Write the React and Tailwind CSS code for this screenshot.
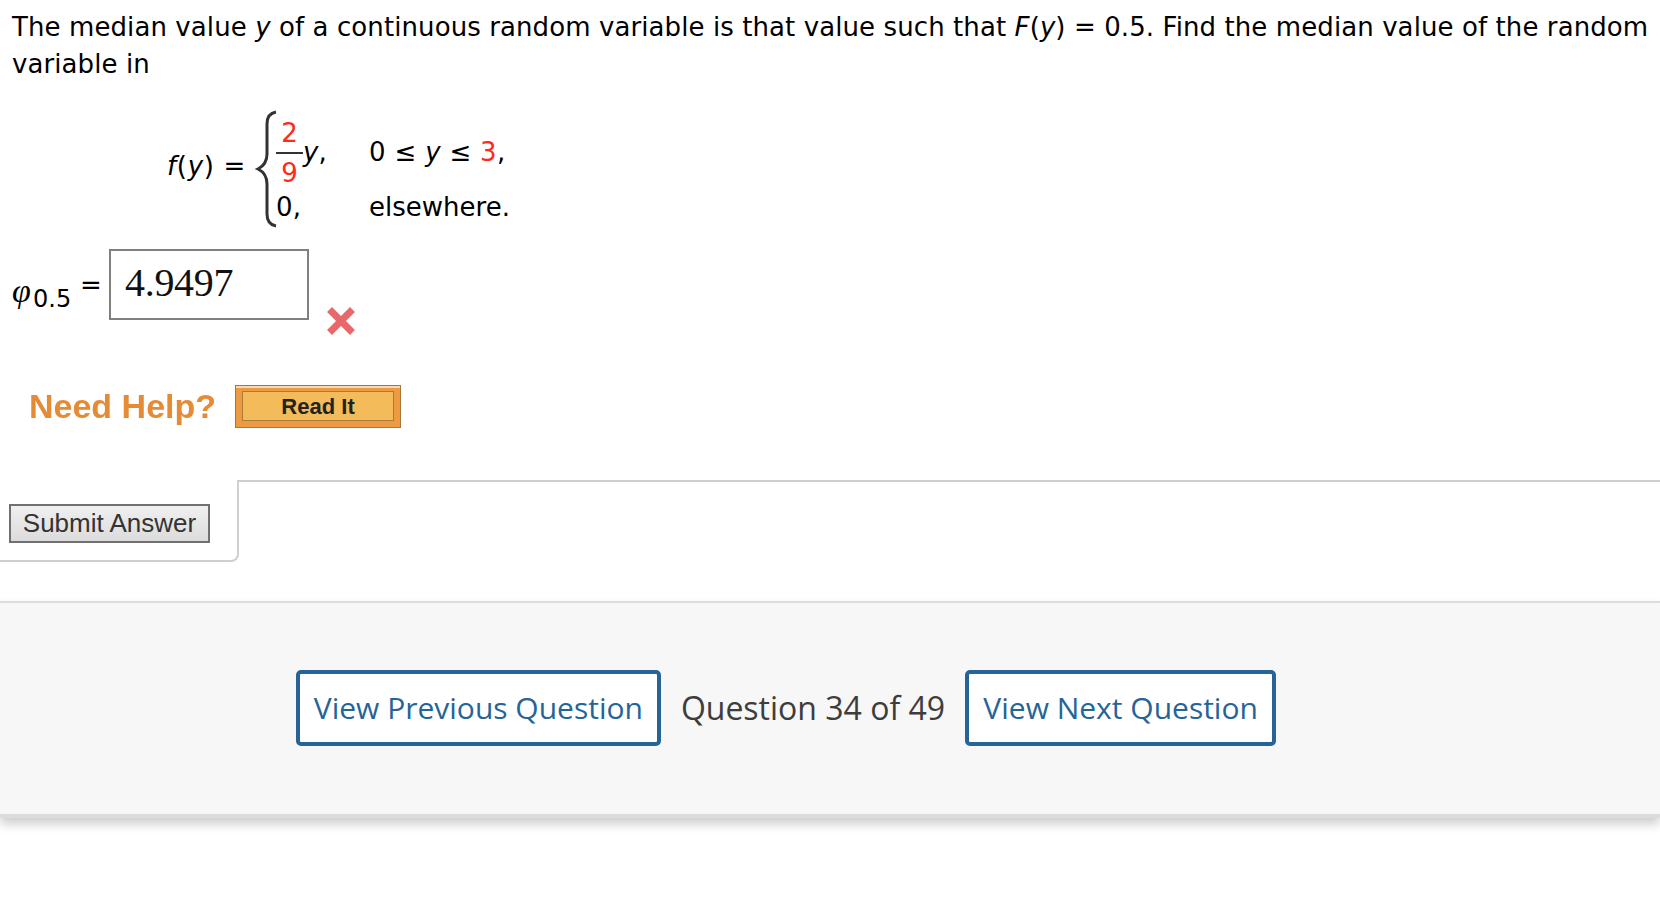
import React from 'react';

function Brace() {
  return (
    <svg width="26" height="118" viewBox="0 0 26 118" className="shrink-0" fill="none">
      <path d="M23 2C17 3 14 7 14 14V44C14 52 11 56 5 59C11 62 14 66 14 74V104C14 111 17 115 23 116" stroke="#333" strokeWidth="3" />
    </svg>
  );
}

function WrongMark() {
  return (
    <svg width="30" height="30" viewBox="0 0 30 30" className="ml-[17px] mt-[57px] shrink-0 blur-[0.4px]">
      <path d="M6 6L24 24M24 6L6 24" stroke="#e8696a" strokeWidth="7" strokeLinecap="square" />
    </svg>
  );
}

export default function App() {
  return (
    <div className="min-h-screen bg-white font-['DejaVu_Sans','Liberation_Sans',sans-serif] text-[26px] leading-[37px] text-black">
      <p className="pl-3 pt-[9px] tracking-[0.09px]">
        The median value <i>y</i> of a continuous random variable is that value such that <i>F</i>(<i>y</i>) = 0.5. Find the median value of the random variable in
      </p>

      {/* piecewise function */}
      <div className="mt-[27px] ml-[167px] flex items-center h-[118px]">
        <span className="mr-[7px] mb-[6px] tracking-[0.7px]"><i>f</i>(<i>y</i>) =</span>
        <Brace />
        <div className="-ml-[3px] mt-[4px] grid grid-cols-[93px_auto] items-center">
          <div className="flex items-center h-[73px]">
            <span className="flex flex-col items-center text-[#ff2a1a] leading-[38px]">
              <span className="w-[27px] text-center border-b-2 border-[#333]">2</span>
              <span>9</span>
            </span>
            <span><i>y</i>,</span>
          </div>
          <div className="tracking-[0.3px]">0 ≤ <i>y</i> ≤ <span className="text-[#ff2a1a]">3</span>,</div>
          <div>0,</div>
          <div>elsewhere.</div>
        </div>
      </div>

      {/* answer */}
      <div className="mt-[21px] ml-3 flex items-start">
        <i className="w-[21px] mt-[23px] font-['Liberation_Serif',serif] text-[34px]">φ</i>
        <span className="w-[47px] mt-[32px] text-[24px]">0.5</span>
        <span className="w-[29px] mt-[18px]">=</span>
        <div className="w-[200px] h-[71px] border-2 border-[#808080] pl-[14px] font-['Liberation_Serif',serif] text-[40px] leading-[64px] tracking-[-0.3px] text-[#111]">
          4.9497
        </div>
        <WrongMark />
      </div>

      {/* help */}
      <div className="mt-[48px] ml-[29px] flex items-center font-['Liberation_Sans',sans-serif]">
        <span className="text-[34px] leading-[44px] font-bold text-[#e58b36] blur-[0.4px]">Need Help?</span>
        <button className="ml-[19px] w-[166px] h-[43px] border border-[#a8763a] bg-[#ed9a42] p-[6px] pt-[5px] shadow-[inset_0_2px_0_#f8dcb8]">
          <span className="flex h-full items-center justify-center border border-[#a97c3b] bg-[#f4bb5a] pt-[2px] text-[22px] font-bold leading-none text-[#222]">
            Read It
          </span>
        </button>
      </div>

      {/* submit */}
      <div className="mt-[52px] flex h-[82px]">
        <div className="flex w-[239px] items-center rounded-br-lg border-r-2 border-b-2 border-[#cfcfcf] pl-[9px] pt-[6px]">
          <button className="w-[201px] h-[39px] border-2 border-[#707070] bg-linear-to-b from-[#f0f0f0] to-[#dcdcdc] font-['Liberation_Sans',sans-serif] text-[26px] leading-none text-[#333]">
            Submit Answer
          </button>
        </div>
        <div className="flex-1 border-t-2 border-[#cfcfcf]" />
      </div>

      {/* footer nav */}
      <div className="mt-[39px] flex h-[217px] justify-center gap-[20px] border-t-2 border-b-4 border-[#dcdcdc] bg-[#f7f7f7] pt-[67px] pr-[88px] font-['Open_Sans',sans-serif] text-[32px] leading-[44px] shadow-[0_6px_10px_rgba(0,0,0,0.2)]">
        <button className="h-[76px] w-[365px] rounded-[5px] border-[4px] border-[#266498] bg-white text-[30px] text-[#266498]">View Previous Question</button>
        <span className="mt-[16px] text-[#3d3d3d]">Question 34 of 49</span>
        <button className="h-[76px] w-[311px] rounded-[5px] border-[4px] border-[#266498] bg-white text-[30px] text-[#266498]">View Next Question</button>
      </div>
    </div>
  );
}
